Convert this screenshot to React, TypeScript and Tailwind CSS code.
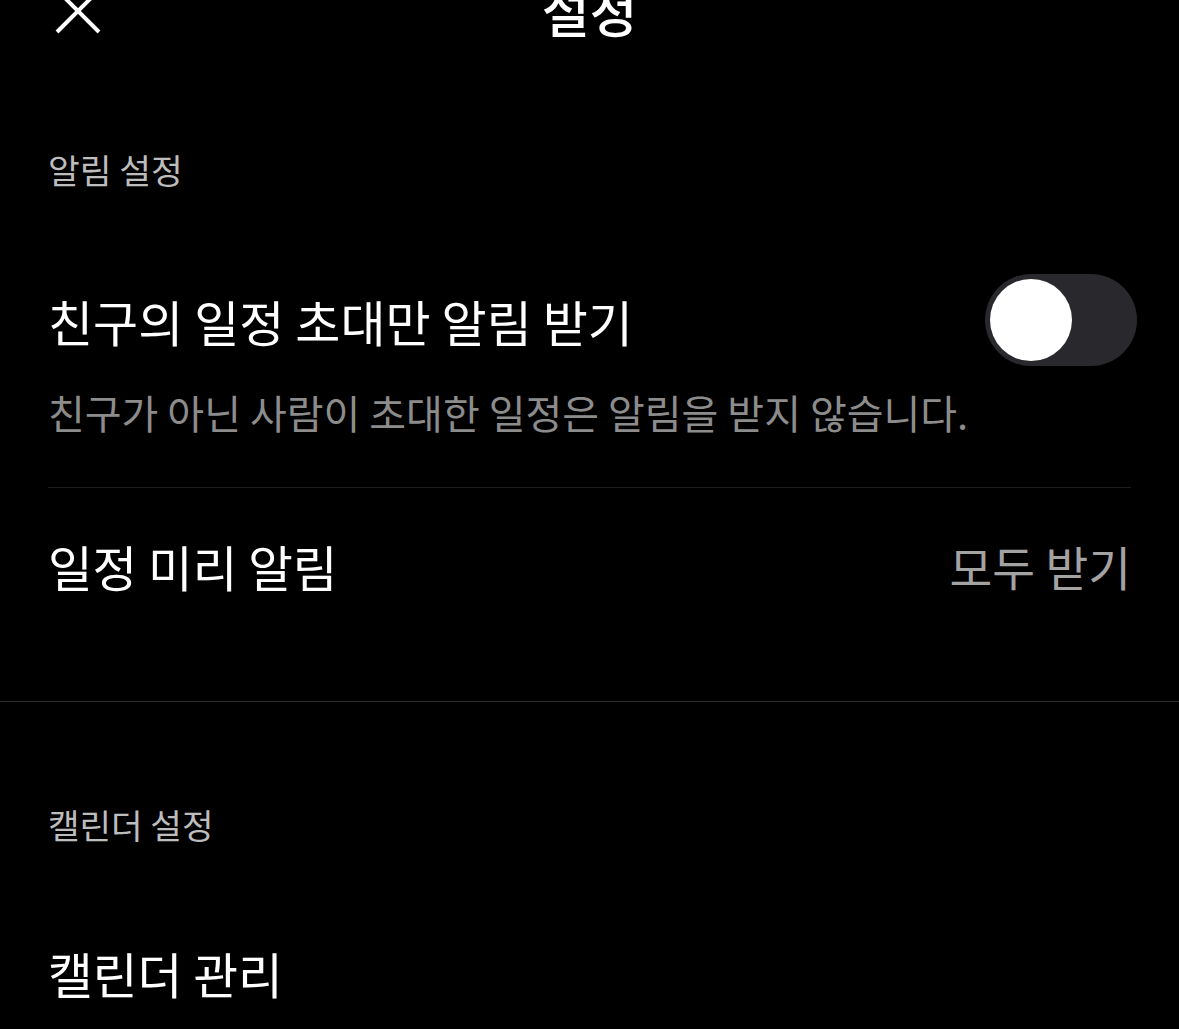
import React from "react";

const font = {
  fontFamily: '"Noto Sans CJK KR", "Noto Sans", sans-serif',
};

function CloseIcon() {
  return (
    <svg width="48" height="48" viewBox="0 0 48 48" fill="none">
      <path d="M3 3 L45 45 M45 3 L3 45" stroke="#ffffff" strokeWidth="4" strokeLinecap="butt" />
    </svg>
  );
}

function Toggle() {
  return (
    <div className="flex h-[92px] w-[152px] items-center rounded-full bg-[#29292d] pl-[5px]">
      <div className="h-[82px] w-[82px] rounded-full bg-white" />
    </div>
  );
}

export default function App() {
  return (
    <div className="h-[1029px] w-full overflow-hidden bg-black text-white" style={font}>
      {/* header */}
      <div className="relative -mt-[49px] flex h-[120px] items-center justify-center">
        <div className="absolute left-[54px] top-[36px]">
          <CloseIcon />
        </div>
        <span className="text-[52px] font-medium leading-none">설정</span>
      </div>

      <div className="px-[48px]">
        <div className="flex h-[198px] items-center text-[34.5px] text-[#bdbdbd]">알림 설정</div>

        <div className="flex h-[102px] items-center justify-between">
          <span className="text-[49px] leading-none">친구의 일정 초대만 알림 받기</span>
          <div className="-mr-[6px]">
            <Toggle />
          </div>
        </div>
        <div className="flex h-[82px] items-center text-[40px] text-[#8c8c8c]">
          친구가 아닌 사람이 초대한 일정은 알림을 받지 않습니다.
        </div>
        <div className="mt-[34px] h-px bg-[#1f1f1f]" />

        <div className="flex h-[156px] items-center justify-between">
          <span className="text-[48.5px] leading-none">일정 미리 알림</span>
          <span className="text-[46.5px] leading-none text-[#a3a3a3]">모두 받기</span>
        </div>
      </div>

      <div className="mt-[57px] h-px bg-[#2b2b2b]" />

      <div className="px-[48px]">
        <div className="flex h-[246px] items-center text-[34.3px] text-[#bdbdbd]">캘린더 설정</div>
        <div className="flex h-[50px] items-center">
          <span className="text-[48.7px] leading-none">캘린더 관리</span>
        </div>
      </div>
    </div>
  );
}
